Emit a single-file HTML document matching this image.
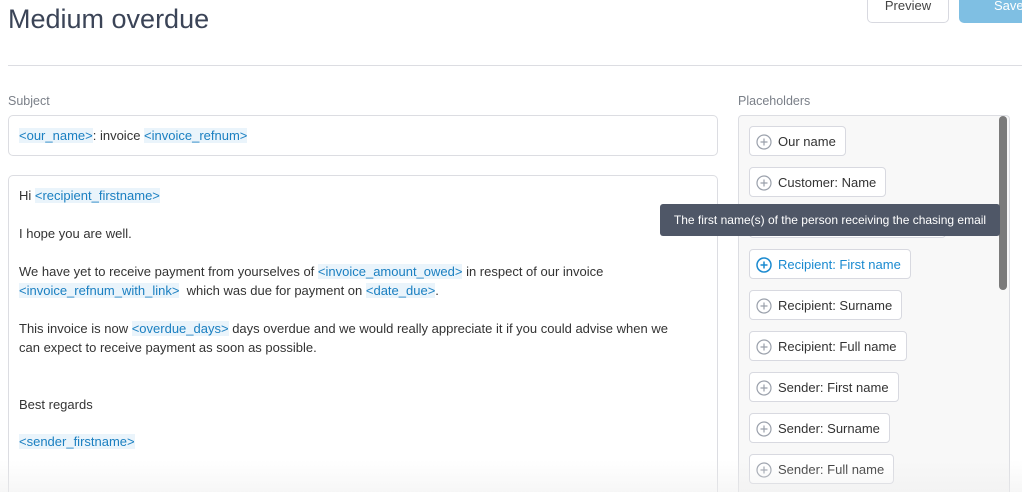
<!DOCTYPE html><html><head><style>
html,body{margin:0;width:1022px;height:492px;overflow:hidden}
body{background:#fff;font-family:"Liberation Sans",sans-serif;position:relative;color:#333}
.a{position:absolute}
h1{position:absolute;left:8px;top:4px;margin:0;font-weight:normal;font-size:27px;color:#3b4457}
.btn{position:absolute;border-radius:5px;font-size:13px;text-align:center}
.lbl{position:absolute;font-size:12.5px;color:#7a7f88}
.box{position:absolute;border:1px solid #dcdde2;border-radius:5px;background:#fff}
.t{position:absolute;left:19px;font-size:13px;white-space:nowrap}
.p{color:#1a7fc1;background:#eaf4fb}
.chip{position:absolute;left:749px;height:30px;border:1px solid #d8d9e0;border-radius:4px;background:#fff;font-size:13px;line-height:30px;padding:0 9px 0 28px;box-sizing:border-box;white-space:nowrap;color:#333}
.chip svg{position:absolute;left:6px;top:7px}
</style></head><body>
<h1>Medium overdue</h1>
<div class="btn" style="left:867px;top:0;width:80px;height:22px;border:1px solid #d8d9e0;border-top:none;border-radius:0 0 5px 5px;line-height:12px;color:#444">Preview</div>
<div class="btn" style="left:959px;top:0;width:63px;height:23px;background:#7fbfe3;color:#fff;line-height:12px;text-align:left;padding-left:35px;box-sizing:border-box;border-radius:0 0 0 5px">Save</div>
<div class="a" style="left:8px;top:65px;width:1014px;height:1px;background:#dcdde2"></div>
<div class="lbl" style="left:8px;top:94px">Subject</div>
<div class="lbl" style="left:738px;top:94px">Placeholders</div>
<div class="box" style="left:8px;top:115px;width:708px;height:39px"></div>
<div class="t" style="top:128px"><span class="p">&lt;our_name&gt;</span>: invoice <span class="p">&lt;invoice_refnum&gt;</span></div>
<div class="box" style="left:8px;top:175px;width:708px;height:317px;border-bottom:none;border-radius:5px 5px 0 0"></div>
<div class="t" style="top:188px">Hi <span class="p">&lt;recipient_firstname&gt;</span></div>
<div class="t" style="top:226px">I hope you are well.</div>
<div class="t" style="top:264px">We have yet to receive payment from yourselves of <span class="p">&lt;invoice_amount_owed&gt;</span> in respect of our invoice</div>
<div class="t" style="top:283px"><span class="p">&lt;invoice_refnum_with_link&gt;</span>&nbsp; which was due for payment on <span class="p">&lt;date_due&gt;</span>.</div>
<div class="t" style="top:321px">This invoice is now <span class="p">&lt;overdue_days&gt;</span> days overdue and we would really appreciate it if you could advise when we</div>
<div class="t" style="top:340px">can expect to receive payment as soon as possible.</div>
<div class="t" style="top:397px">Best regards</div>
<div class="t" style="top:434px"><span class="p">&lt;sender_firstname&gt;</span></div>
<div class="a" style="left:738px;top:115px;width:270px;height:377px;border:1px solid #dcdde2;border-bottom:none;border-radius:4px 4px 0 0;background:#f8f8f8"></div>
<div class="a" style="left:999px;top:116px;width:8px;height:174px;background:#7b7b7b;border-radius:4px"></div>
<div class="chip" style="top:126px">Our name<svg width="16" height="16"><circle cx="8" cy="8" r="7" fill="none" stroke="#9aa0ab" stroke-width="1.2"/><path d="M8 4.5v7M4.5 8h7" stroke="#9aa0ab" stroke-width="1.2"/></svg></div>
<div class="chip" style="top:167px">Customer: Name<svg width="16" height="16"><circle cx="8" cy="8" r="7" fill="none" stroke="#9aa0ab" stroke-width="1.2"/><path d="M8 4.5v7M4.5 8h7" stroke="#9aa0ab" stroke-width="1.2"/></svg></div>
<div class="chip" style="top:208px">Customer: Account number<svg width="16" height="16"><circle cx="8" cy="8" r="7" fill="none" stroke="#9aa0ab" stroke-width="1.2"/></svg></div>
<div class="chip" style="top:249px;color:#1a8ad0">Recipient: First name<svg width="16" height="16"><circle cx="8" cy="8" r="7" fill="none" stroke="#1a8ad0" stroke-width="1.5"/><path d="M8 4.5v7M4.5 8h7" stroke="#1a8ad0" stroke-width="1.5"/></svg></div>
<div class="chip" style="top:290px">Recipient: Surname<svg width="16" height="16"><circle cx="8" cy="8" r="7" fill="none" stroke="#9aa0ab" stroke-width="1.2"/><path d="M8 4.5v7M4.5 8h7" stroke="#9aa0ab" stroke-width="1.2"/></svg></div>
<div class="chip" style="top:331px">Recipient: Full name<svg width="16" height="16"><circle cx="8" cy="8" r="7" fill="none" stroke="#9aa0ab" stroke-width="1.2"/><path d="M8 4.5v7M4.5 8h7" stroke="#9aa0ab" stroke-width="1.2"/></svg></div>
<div class="chip" style="top:372px">Sender: First name<svg width="16" height="16"><circle cx="8" cy="8" r="7" fill="none" stroke="#9aa0ab" stroke-width="1.2"/><path d="M8 4.5v7M4.5 8h7" stroke="#9aa0ab" stroke-width="1.2"/></svg></div>
<div class="chip" style="top:413px">Sender: Surname<svg width="16" height="16"><circle cx="8" cy="8" r="7" fill="none" stroke="#9aa0ab" stroke-width="1.2"/><path d="M8 4.5v7M4.5 8h7" stroke="#9aa0ab" stroke-width="1.2"/></svg></div>
<div class="chip" style="top:454px">Sender: Full name<svg width="16" height="16"><circle cx="8" cy="8" r="7" fill="none" stroke="#9aa0ab" stroke-width="1.2"/><path d="M8 4.5v7M4.5 8h7" stroke="#9aa0ab" stroke-width="1.2"/></svg></div>
<div class="a" style="left:660px;top:204px;width:340px;height:32px;background:#4f5767;border-radius:3px;color:#fff;font-size:12px;line-height:32px;text-align:center;white-space:nowrap">The first name(s) of the person receiving the chasing email</div>
<div class="a" style="left:0;top:460px;width:1022px;height:32px;background:linear-gradient(rgba(240,240,240,0),rgba(238,238,238,.5))"></div>
</body></html>
